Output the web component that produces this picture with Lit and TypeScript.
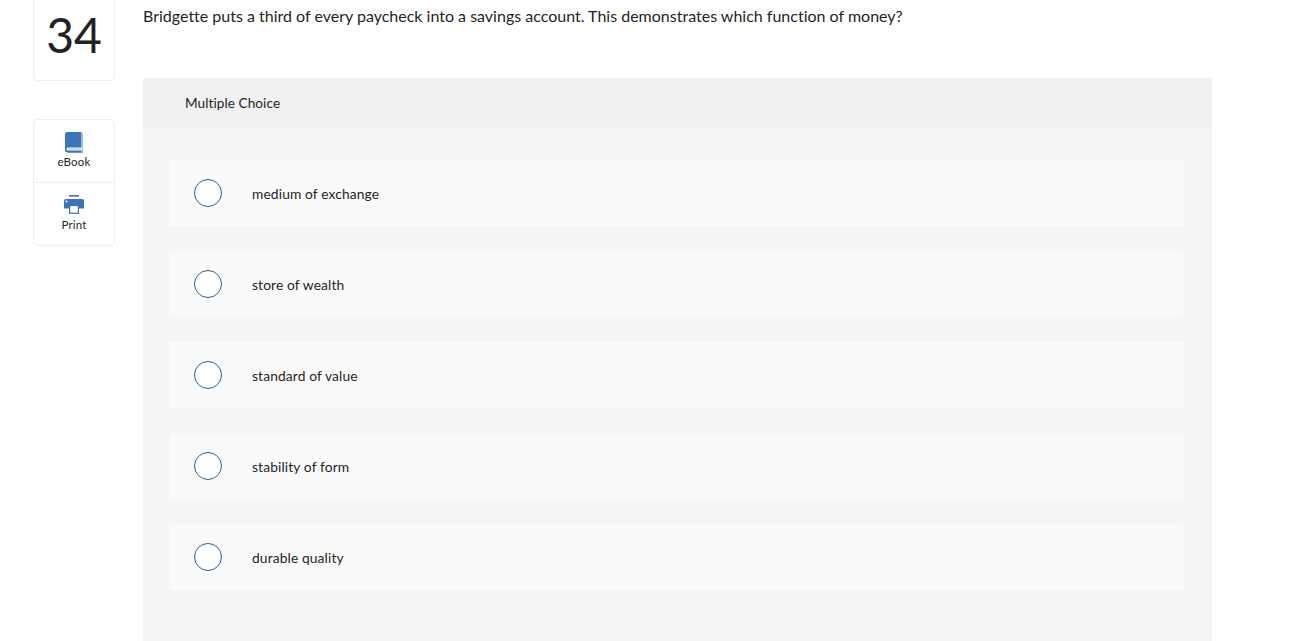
import { LitElement, html, css } from "lit";
import { customElement } from "lit/decorators.js";

const OPTIONS = ["medium of exchange", "store of wealth", "standard of value", "stability of form", "durable quality"];

@customElement("app-root")
export class AppRoot extends LitElement {
  static styles = css`
    :host {
      display: block;
      height: 641px;
      overflow: hidden;
      background: #fff;
      font-family: "Lato", "Liberation Sans", sans-serif;
      font-variant-ligatures: none;
      color: #1f1f1f;
    }
    .page { display: flex; align-items: flex-start; padding-left: 33px; height: 641px; box-sizing: border-box; }
    .side { width: 82px; flex: none; display: flex; flex-direction: column; gap: 38px; }
    .num {
      height: 81px; box-sizing: border-box;
      border: 1px solid #eee; border-top: none; border-radius: 0 0 5px 5px;
      display: flex; align-items: center; justify-content: center;
      font-family: "Lato", sans-serif; font-size: 48px; font-weight: 400; color: #222;
      padding-bottom: 12px;
    }
    .tools { border: 1px solid #eee; border-radius: 5px; height: 127px; box-sizing: border-box; display: flex; flex-direction: column; }
    .tool { flex: 1; display: flex; flex-direction: column; align-items: center; padding-top: 12px; font-size: 11.5px; line-height: 14px; letter-spacing: 0.2px; box-sizing: border-box; }
    .tool + .tool { border-top: 1px solid #eee; }
    .tool svg { display: block; margin-bottom: 2px; }
    .tool + .tool svg { margin-bottom: 4px; height: 19px; }
    .main { margin-left: 28px; width: 1069px; flex: none; }
    .q { margin: 6px 0 0; height: 72px; font-size: 16px; line-height: 19px; }
    .panel { background: #f5f5f5; border-radius: 3px 3px 0 0; height: 563px; }
    .head { height: 50px; background: #f0f0f0; border-radius: 3px 3px 0 0; padding-left: 42px; display: flex; align-items: center; font-size: 13.6px; letter-spacing: 0.07px; }
    .opts { display: flex; flex-direction: column; gap: 25px; padding: 32px 28px 0 26px; }
    .opt { height: 66px; background: #fafafa; border-radius: 3px; display: flex; align-items: center; padding-left: 25px; font-size: 13.8px; letter-spacing: 0.12px; }
    .label { padding-top: 1px; }
    .radio { width: 28px; height: 28px; box-sizing: border-box; border: 1px solid #2a5f96; border-radius: 50%; background: #fff; margin-right: 30px; flex: none; }
  `;

  render() {
    return html`
      <div class="page">
        <div class="side">
          <div class="num">34</div>
          <div class="tools">
            <div class="tool">
              <svg width="18" height="21" viewBox="0 0 18 21">
                <path fill="#9dbbdc" d="M15 1H18V21H3V19H17V1Z"/>
                <path fill="#3b74b8" d="M2.5 0H16.5V15.5H3A1.5 1.5 0 0 0 3 18.5H16.5V20.5H2.5A2.5 2.5 0 0 1 0 18V2.5A2.5 2.5 0 0 1 2.5 0Z"/>
                <rect x="3" y="16.3" width="13.5" height="1.4" fill="#b9cfe6"/>
              </svg>
              eBook
            </div>
            <div class="tool">
              <svg width="20" height="19" viewBox="0 0 20 19">
                <rect x="5" y="0" width="10" height="1.6" fill="#3b74b8"/>
                <path fill="#3b74b8" d="M2 4H18A2 2 0 0 1 20 6V13.5H15V10H5V13.5H0V6A2 2 0 0 1 2 4Z"/>
                <circle cx="2.5" cy="6.5" r="1" fill="#fff"/>
                <rect x="5.6" y="10.5" width="8.8" height="7.8" fill="#fff" stroke="#3b74b8" stroke-width="1.2"/>
              </svg>
              Print
            </div>
          </div>
        </div>
        <div class="main">
          <p class="q">Bridgette puts a third of every paycheck into a savings account. This demonstrates which function of money?</p>
          <div class="panel">
            <div class="head">Multiple Choice</div>
            <div class="opts">
              ${OPTIONS.map((o) => html`<div class="opt"><span class="radio"></span><span class="label">${o}</span></div>`)}
            </div>
          </div>
        </div>
      </div>
    `;
  }
}
